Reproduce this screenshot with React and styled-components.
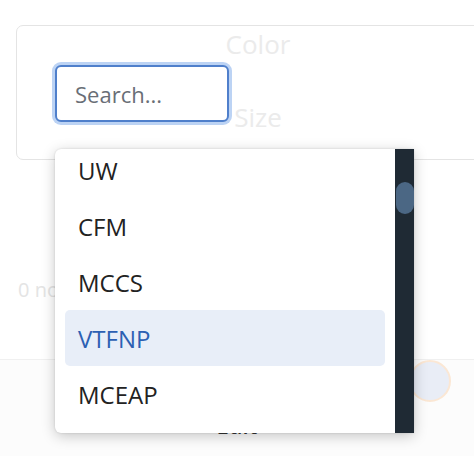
import styled, { createGlobalStyle } from 'styled-components';

const GlobalStyle = createGlobalStyle`
  html, body { margin: 0; padding: 0; background: #fff; }
  body { font-family: "Open Sans", "Noto Sans", sans-serif; width: 474px; height: 456px; overflow: hidden; }
`;

const Page = styled.div`
  position: relative;
  width: 474px;
  height: 456px;
  overflow: hidden;
`;

const Backdrop = styled.div`
  display: flex;
  flex-direction: column;
  padding-top: 25px;
`;

const Card = styled.div`
  margin-left: 16px;
  width: 500px;
  height: 135px;
  border: 1px solid #e4e4e4;
  border-radius: 7px;
  box-sizing: border-box;
  display: flex;
  flex-direction: column;
`;

const Label = styled.div`
  width: 482px;
  text-align: center;
  font-size: 26px;
  line-height: 34px;
  color: #ebebeb;
  margin-top: ${(p) => p.$top || 0}px;
`;

const SearchInput = styled.input`
  margin-left: 38px;
  margin-top: 4px;
  width: 174px;
  height: 57px;
  box-sizing: border-box;
  border: 2px solid #4f7fcb;
  border-radius: 6px;
  box-shadow: 0 0 0 3px #bcd3f4;
  outline: none;
  padding: 0 0 0 18px;
  font-family: inherit;
  font-size: 22px;
  color: #333;
  background: #fff;
  position: relative;
  z-index: 1;
  &::placeholder { color: #696e76; }
`;

const Empty = styled.div`
  margin-top: 116px;
  padding-left: 18px;
  font-size: 20px;
  line-height: 28px;
  color: #e4e4e4;
`;

const Footer = styled.div`
  margin-top: 55px;
  border-top: 1px solid #f0f0f0;
  background: #fcfcfc;
  height: 98px;
  display: flex;
  flex-direction: column;
  align-items: center;
  position: relative;
`;

const RoundButton = styled.div`
  position: absolute;
  left: 409px;
  top: 0;
  width: 38px;
  height: 38px;
  border-radius: 50%;
  border: 2px solid #fbe7d4;
  background: #e9edf6;
`;

const EditText = styled.div`
  margin-top: 50px;
  font-size: 22px;
  line-height: 30px;
  font-weight: 600;
  color: #333;
`;

const Menu = styled.div`
  position: absolute;
  left: 55px;
  top: 149px;
  width: 359px;
  height: 284px;
  display: flex;
  background: #fff;
  border-radius: 6px 0 0 6px;
  box-shadow: 0 3px 14px rgba(0, 0, 0, 0.22), 0 0 2px rgba(0, 0, 0, 0.15);
  overflow: hidden;
`;

const List = styled.div`
  flex: 1;
  overflow: hidden;
  padding: 0 10px;
`;

const Items = styled.div`
  margin-top: -7px;
  display: flex;
  flex-direction: column;
`;

const Item = styled.div`
  height: 56px;
  display: flex;
  align-items: center;
  padding-left: 13px;
  font-size: 24px;
  border-radius: 5px;
  color: ${(p) => (p.$active ? '#2c60b3' : '#222')};
  background: ${(p) => (p.$active ? '#e8eef8' : 'transparent')};
`;

const Track = styled.div`
  width: 19px;
  background: #1f2a34;
  display: flex;
  justify-content: center;
  padding-top: 33px;
`;

const Thumb = styled.div`
  width: 18px;
  height: 32px;
  border-radius: 9px;
  background: #4b6784;
`;

const items = ['UW', 'CFM', 'MCCS', 'VTFNP', 'MCEAP'];

export default function App() {
  return (
    <Page>
      <GlobalStyle />
      <Backdrop>
        <Card>
          <Label $top={1}>Color</Label>
          <SearchInput placeholder="Search..." />
          <Label $top={-22}>Size</Label>
        </Card>
        <Empty>0 no</Empty>
        <Footer>
          <RoundButton />
          <EditText>Edit</EditText>
        </Footer>
      </Backdrop>
      <Menu>
        <List>
          <Items>
            {items.map((it) => (
              <Item key={it} $active={it === 'VTFNP'}>{it}</Item>
            ))}
          </Items>
        </List>
        <Track>
          <Thumb />
        </Track>
      </Menu>
    </Page>
  );
}
